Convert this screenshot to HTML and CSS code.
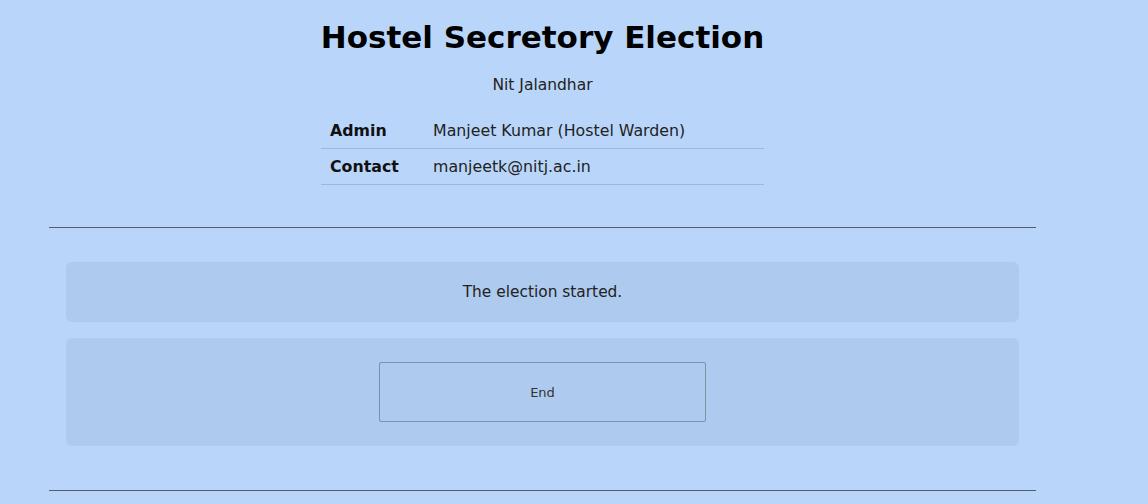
FILE: index.html
```html
<!DOCTYPE html>
<html>
<head>
<meta charset="utf-8">
<link rel="stylesheet" href="styles.css">
</head>
<body>
<div class="page">
  <header class="head">
    <h1 class="title">Hostel Secretory Election</h1>
    <p class="org">Nit Jalandhar</p>
    <table class="info">
      <tr><th>Admin</th><td>Manjeet Kumar (Hostel Warden)</td></tr>
      <tr><th>Contact</th><td>manjeetk@nitj.ac.in</td></tr>
    </table>
  </header>
  <hr class="rule">
  <section class="panels">
    <div class="panel status">The election started.</div>
    <div class="panel action"><button class="btn">End</button></div>
  </section>
  <hr class="rule">
</div>
</body>
</html>
```

FILE: styles.css
```css
html, body {
  margin: 0;
  padding: 0;
  background: #b9d6fa;
}
body {
  font-family: "DejaVu Sans", Verdana, sans-serif;
  color: #111;
  width: 1148px;
  height: 504px;
  overflow: hidden;
}
.page {
  width: 987px;
  margin-left: 49px;
  padding-top: 17px;
}
.head {
  display: flex;
  flex-direction: column;
  align-items: center;
}
.title {
  margin: 0;
  font-size: 31px;
  line-height: 40px;
  font-weight: bold;
  color: #000;
}
.org {
  margin: 18px 0 0;
  font-size: 15.5px;
  line-height: 20px;
  color: #222;
}
.info {
  margin-top: 18px;
  width: 443px;
  border-collapse: collapse;
  font-size: 15.8px;
  color: #222;
}
.info th, .info td {
  text-align: left;
  height: 35px;
  padding: 0 9px;
  border-bottom: 1px solid #9fb8d8;
}
.info th {
  width: 85px;
  font-weight: bold;
  color: #111;
}
.rule {
  margin: 42px 0 0;
  border: 0;
  border-top: 1px solid #555d66;
  height: 0;
}
.panels {
  padding: 34px 17px 44px;
  display: flex;
  flex-direction: column;
  gap: 16px;
}
.panel {
  background: #aecaef;
  border-radius: 6px;
}
.status {
  height: 60px;
  display: flex;
  align-items: center;
  justify-content: center;
  font-size: 15.4px;
  color: #222;
}
.action {
  padding: 24px 0;
  display: flex;
  justify-content: center;
}
.btn {
  width: 327px;
  height: 60px;
  background: #aecaef;
  border: 1px solid #7f90a6;
  border-radius: 2px;
  font-family: "DejaVu Sans", Verdana, sans-serif;
  font-size: 13px;
  color: #333;
}
.panels + .rule {
  margin-top: 0;
}
```
